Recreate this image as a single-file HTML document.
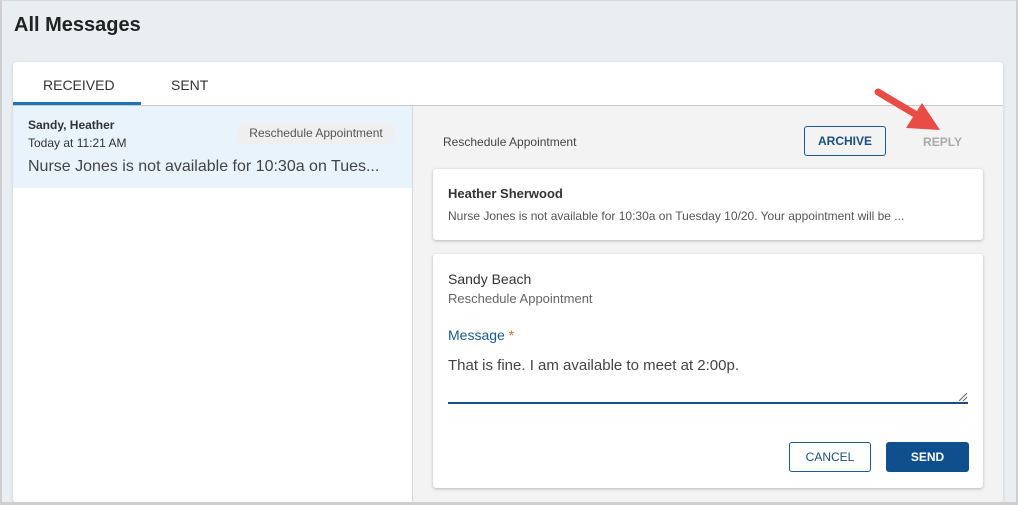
<!DOCTYPE html>
<html><head><meta charset="utf-8"><style>
*{box-sizing:border-box;margin:0;padding:0}
body{width:1018px;height:505px;overflow:hidden;font-family:"Liberation Sans",sans-serif;background:#e9eff1;position:relative;color:#333}
.frame{position:absolute;left:0;top:0;width:1018px;height:505px;border:2px solid #cfcfcf;border-top:1px solid #d8d8d8;border-bottom:3px solid #cfcfcf}
h1{position:absolute;left:14px;top:14px;font-size:20px;font-weight:bold;color:#222}
.card{position:absolute;left:13px;top:62px;width:990px;height:441px;background:#fff;border-radius:4px;box-shadow:0 1px 3px rgba(0,0,0,.15);overflow:hidden}
.tabs{position:absolute;left:0;top:0;width:990px;height:44px;border-bottom:1px solid #c8c8c8}
.tab{position:absolute;top:15px;font-size:14px;color:#333}
.ul{position:absolute;left:0;top:40px;width:128px;height:3px;background:#1f73b7}
.item{position:absolute;left:0;top:44px;width:399px;height:82px;background:#e9f3fc}
.left{position:absolute;left:399px;top:44px;width:1px;height:400px;background:#d8d8d8}
.right{position:absolute;left:400px;top:44px;width:590px;height:400px;background:#f3f3f3}
.box{position:absolute;background:#fff;border-radius:3px;box-shadow:0 1px 3px rgba(0,0,0,.25)}
.btn{position:absolute;font-size:12px;font-weight:bold;text-align:center;border-radius:3px}
</style></head><body>
<h1>All Messages</h1>
<div class="card">
 <div class="tabs"><span class="tab" style="left:30px">RECEIVED</span><span class="tab" style="left:158px">SENT</span><div class="ul"></div></div>
 <div class="item">
  <div style="position:absolute;left:15px;top:12px;font-size:12px;font-weight:bold">Sandy, Heather</div>
  <div style="position:absolute;left:15px;top:30px;font-size:12px">Today at 11:21 AM</div>
  <div style="position:absolute;left:224px;top:17px;width:158px;height:21px;border-radius:10px;background:#efefef;font-size:12px;color:#555;text-align:center;line-height:21px">Reschedule Appointment</div>
  <div style="position:absolute;left:15px;top:52px;font-size:16px;color:#444">Nurse Jones is not available for 10:30a on Tues...</div>
 </div>
 <div class="left"></div>
 <div class="right">
  <div style="position:absolute;left:30px;top:29px;font-size:12px;color:#444">Reschedule Appointment</div>
  <div class="btn" style="left:391px;top:20px;width:82px;height:30px;border:1px solid #1b5a92;color:#1b4f80;line-height:28px">ARCHIVE</div>
  <div class="btn" style="left:502px;top:29px;width:55px;color:#aaa">REPLY</div>
  <div class="box" style="left:20px;top:63px;width:550px;height:71px">
   <div style="position:absolute;left:15px;top:17px;font-size:13px;font-weight:bold;color:#333">Heather Sherwood</div>
   <div style="position:absolute;left:15px;top:40px;font-size:12px;color:#555;white-space:nowrap">Nurse Jones is not available for 10:30a on Tuesday 10/20. Your appointment will be ...</div>
  </div>
  <div class="box" style="left:20px;top:148px;width:550px;height:234px">
   <div style="position:absolute;left:15px;top:17px;font-size:14px;color:#333">Sandy Beach</div>
   <div style="position:absolute;left:15px;top:37px;font-size:13px;color:#666">Reschedule Appointment</div>
   <div style="position:absolute;left:15px;top:73px;font-size:14px;color:#1b5a92">Message <span style="color:#e07020">*</span></div>
   <div style="position:absolute;left:15px;top:103px;font-size:15px;color:#444">That is fine. I am available to meet at 2:00p.</div>
   <div style="position:absolute;left:15px;top:148px;width:520px;height:2px;background:#1b4f80"></div>
   <svg style="position:absolute;left:526px;top:139px" width="8" height="8"><line x1="0" y1="8" x2="8" y2="0" stroke="#666"/><line x1="4" y1="8" x2="8" y2="4" stroke="#666"/></svg>
   <div class="btn" style="left:356px;top:188px;width:82px;height:30px;border:1px solid #1b5a92;color:#1b4f80;line-height:28px;font-weight:normal">CANCEL</div>
   <div class="btn" style="left:453px;top:188px;width:83px;height:30px;background:#104f8d;color:#fff;line-height:30px">SEND</div>
  </div>
 </div>
</div>
<svg style="position:absolute;left:0;top:0" width="1018" height="505"><line x1="878" y1="92" x2="915" y2="114" stroke="#e84c45" stroke-width="7" stroke-linecap="round"/><polygon points="940,130 906,128 922,103" fill="#e84c45"/></svg>
<div class="frame"></div>
</body></html>
